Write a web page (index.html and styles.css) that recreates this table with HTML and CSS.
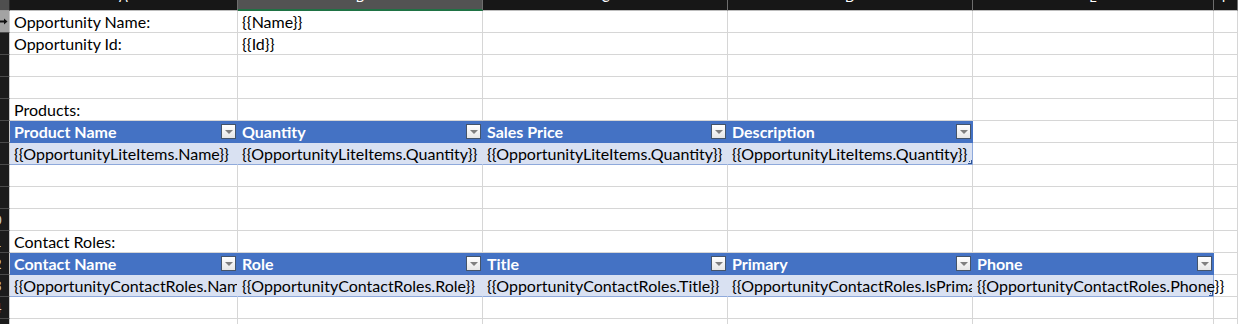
FILE: index.html
```html
<!DOCTYPE html>
<html lang="en">
<head>
  <meta charset="UTF-8">
  <title>Opportunity Template</title>
  <link rel="stylesheet" href="styles.css">
</head>
<body>

<div class="sheet">
  <!-- column letters -->
  <div class="row col-heads">
    <div class="corner"></div>
    <div class="ch"><span>A</span></div>
    <div class="ch active"><span>B</span></div>
    <div class="ch"><span>C</span></div>
    <div class="ch"><span>D</span></div>
    <div class="ch"><span>E</span></div>
    <div class="ch"><span>F</span></div>
  </div>

  <div class="row">
    <div class="rh current">
      <svg class="row-arrow" viewBox="0 0 8 7"><path d="M0 2.5h4V0.5L7.5 3.5 4 6.5V4.5H0z"/></svg>
    </div>
    <div class="cell">Opportunity Name:</div>
    <div class="cell">{{Name}}</div>
    <div class="cell"></div><div class="cell"></div><div class="cell"></div><div class="cell"></div>
  </div>
  <div class="row">
    <div class="rh"><span>2</span></div>
    <div class="cell">Opportunity Id:</div>
    <div class="cell">{{Id}}</div>
    <div class="cell"></div><div class="cell"></div><div class="cell"></div><div class="cell"></div>
  </div>
  <div class="row">
    <div class="rh"><span>3</span></div>
    <div class="cell"></div><div class="cell"></div><div class="cell"></div><div class="cell"></div><div class="cell"></div><div class="cell"></div>
  </div>
  <div class="row">
    <div class="rh"><span>4</span></div>
    <div class="cell"></div><div class="cell"></div><div class="cell"></div><div class="cell"></div><div class="cell"></div><div class="cell"></div>
  </div>
  <div class="row">
    <div class="rh"><span>5</span></div>
    <div class="cell">Products:</div>
    <div class="cell"></div><div class="cell"></div><div class="cell"></div><div class="cell"></div><div class="cell"></div>
  </div>

  <!-- products table -->
  <div class="row">
    <div class="rh"><span>6</span></div>
    <div class="cell th">Product Name<i class="filter"></i></div>
    <div class="cell th">Quantity<i class="filter"></i></div>
    <div class="cell th">Sales Price<i class="filter"></i></div>
    <div class="cell th">Description<i class="filter"></i></div>
    <div class="cell"></div><div class="cell"></div>
  </div>
  <div class="row">
    <div class="rh"><span>7</span></div>
    <div class="cell td">{{OpportunityLiteItems.Name}}</div>
    <div class="cell td">{{OpportunityLiteItems.Quantity}}</div>
    <div class="cell td">{{OpportunityLiteItems.Quantity}}</div>
    <div class="cell td last">{{OpportunityLiteItems.Quantity}}<i class="grip"></i></div>
    <div class="cell"></div><div class="cell"></div>
  </div>

  <div class="row">
    <div class="rh"><span>8</span></div>
    <div class="cell"></div><div class="cell"></div><div class="cell"></div><div class="cell"></div><div class="cell"></div><div class="cell"></div>
  </div>
  <div class="row">
    <div class="rh"><span>9</span></div>
    <div class="cell"></div><div class="cell"></div><div class="cell"></div><div class="cell"></div><div class="cell"></div><div class="cell"></div>
  </div>
  <div class="row">
    <div class="rh"><span>10</span></div>
    <div class="cell"></div><div class="cell"></div><div class="cell"></div><div class="cell"></div><div class="cell"></div><div class="cell"></div>
  </div>
  <div class="row">
    <div class="rh"><span>11</span></div>
    <div class="cell">Contact Roles:</div>
    <div class="cell"></div><div class="cell"></div><div class="cell"></div><div class="cell"></div><div class="cell"></div>
  </div>

  <!-- contact roles table -->
  <div class="row">
    <div class="rh"><span>12</span></div>
    <div class="cell th">Contact Name<i class="filter"></i></div>
    <div class="cell th">Role<i class="filter"></i></div>
    <div class="cell th">Title<i class="filter"></i></div>
    <div class="cell th">Primary<i class="filter"></i></div>
    <div class="cell th">Phone<i class="filter"></i></div>
    <div class="cell"></div>
  </div>
  <div class="row">
    <div class="rh"><span>13</span></div>
    <div class="cell td">{{OpportunityContactRoles.Name}}</div>
    <div class="cell td">{{OpportunityContactRoles.Role}}</div>
    <div class="cell td">{{OpportunityContactRoles.Title}}</div>
    <div class="cell td">{{OpportunityContactRoles.IsPrimary}}</div>
    <div class="cell td last spill">{{OpportunityContactRoles.Phone}}<i class="grip"></i></div>
    <div class="cell"></div>
  </div>

  <div class="row">
    <div class="rh"><span>14</span></div>
    <div class="cell"></div><div class="cell"></div><div class="cell"></div><div class="cell"></div><div class="cell"></div><div class="cell"></div>
  </div>
  <div class="row">
    <div class="rh"><span>15</span></div>
    <div class="cell"></div><div class="cell"></div><div class="cell"></div><div class="cell"></div><div class="cell"></div><div class="cell"></div>
  </div>
</div>

</body>
</html>
```

FILE: styles.css
```css
body {
  margin: 0;
  background: #ffffff;
  overflow: hidden;
  font-family: Lato, "Liberation Sans", sans-serif;
  color: #000000;
}

.sheet {
  width: 1238px;
  height: 324px;
  overflow: hidden;
}

.row {
  display: flex;
  height: 22px;
}

/* column widths */
.row > :nth-child(1) { width: 10px; flex: none; }
.row > :nth-child(2) { width: 228px; flex: none; }
.row > :nth-child(3),
.row > :nth-child(4),
.row > :nth-child(5) { width: 245px; flex: none; }
.row > :nth-child(6) { width: 241px; flex: none; }
.row > :nth-child(7) { flex: 1; }

.row > * {
  box-sizing: border-box;
}

/* column letter strip, scrolled so only the feet of the letters show */
.col-heads {
  height: 11px;
}

.corner {
  background: #4f4f4f;
  border-right: 1px solid #2a2a2a;
  border-bottom: 1px solid #9a9a9a;
}

.ch {
  background: #171717;
  border-right: 1px solid #6e6e6e;
  border-bottom: 1px solid #bdbdbd;
  display: flex;
  justify-content: center;
  overflow: hidden;
  color: #ffffff;
  font-size: 13px;
}

.ch span {
  line-height: 13px;
  margin-top: -9px;
}

.ch.active {
  background: #535353;
  border-bottom: 2px solid #1f7244;
}

/* row numbers, mostly cut off at the left edge */
.rh {
  background: #1b1b1b;
  border-right: 1px solid #c9c9c9;
  border-bottom: 1px solid #4a4a4a;
  overflow: hidden;
  display: flex;
  align-items: center;
  color: #d6d6d6;
  font-size: 13px;
}

.rh span {
  flex: none;
  width: 30px;
  margin-left: -21px;
  text-align: center;
}

.rh.current {
  background: #a3a3a3;
  justify-content: center;
}

.row-arrow {
  width: 8px;
  height: 7px;
  margin-left: -1px;
  fill: #111111;
}

.cell {
  border-right: 1px solid #d6d6d6;
  border-bottom: 1px solid #d6d6d6;
  padding: 0 4px 1px 4px;
  display: flex;
  align-items: flex-end;
  white-space: nowrap;
  overflow: hidden;
  font-size: 16px;
  line-height: 19px;
}

/* table header */
.th {
  background: #4472c4;
  border-color: #4472c4;
  color: #ffffff;
  font-weight: bold;
  padding-right: 1px;
}

.filter {
  flex: none;
  align-self: center;
  margin-left: auto;
  width: 15px;
  height: 15px;
  box-sizing: border-box;
  border: 1px solid #44546a;
  background: linear-gradient(#ffffff, #e6e6e6);
  position: relative;
}

.filter::after {
  content: "";
  position: absolute;
  left: 3px;
  top: 5px;
  border-left: 4px solid transparent;
  border-right: 4px solid transparent;
  border-top: 4px solid #7f7f7f;
}

/* table body */
.td {
  background: #d9e1f2;
  border-right-color: #d9e1f2;
  border-bottom-color: #8ea9db;
}

.td.last {
  border-right-color: #8ea9db;
  position: relative;
}

.td.spill {
  overflow: visible;
}

/* table resize corner */
.grip {
  position: absolute;
  right: 0;
  bottom: 0;
  width: 4px;
  height: 4px;
  background:
    linear-gradient(#2f5597, #2f5597) right bottom / 4px 1px no-repeat,
    linear-gradient(#2f5597, #2f5597) right bottom / 1px 4px no-repeat,
    linear-gradient(#2f5597, #2f5597) 1px 1px / 1px 1px no-repeat;
}
```
